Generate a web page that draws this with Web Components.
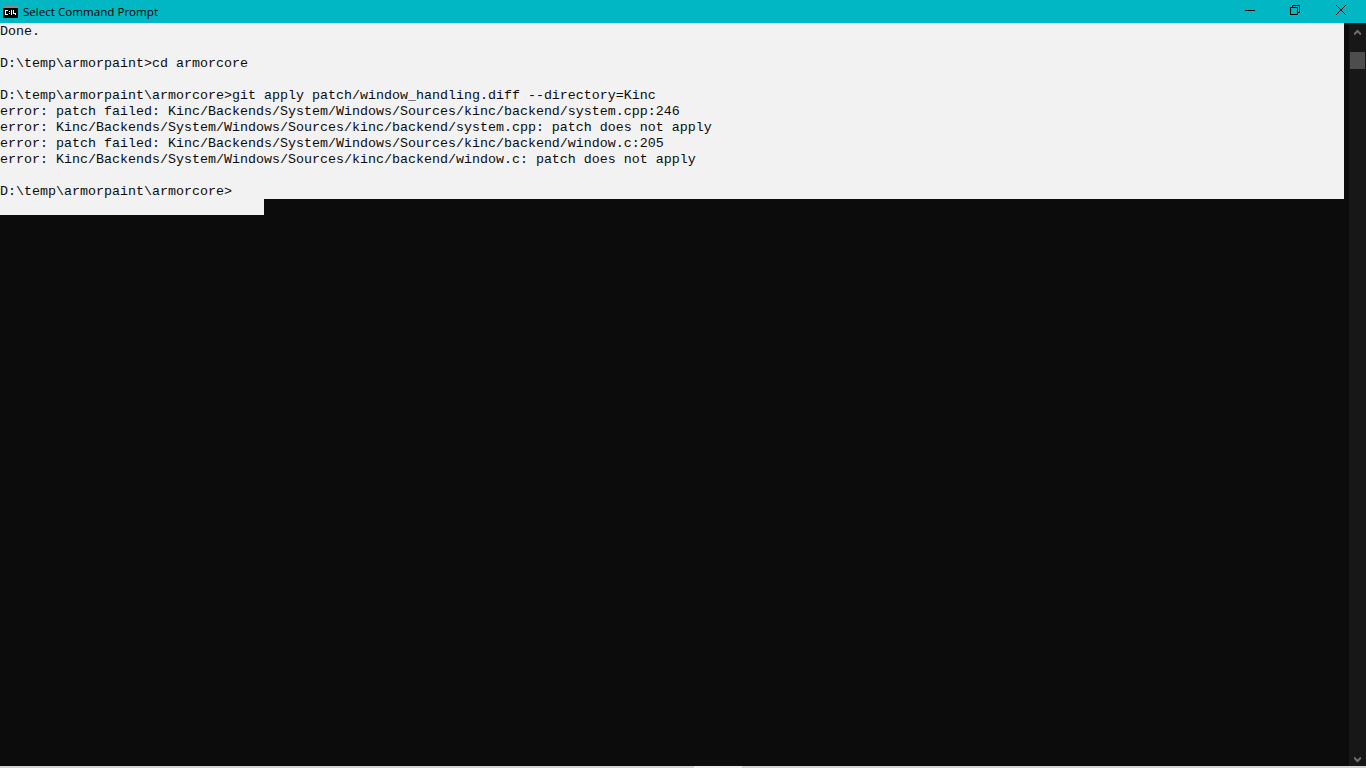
<!DOCTYPE html>
<html>
<head>
<meta charset="utf-8">
<title>Select Command Prompt</title>
<style>
  html, body { margin: 0; padding: 0; height: 100%; overflow: hidden; background: #0c0c0c; }
  console-window { height: 768px; }
</style>
</head>
<body>
<console-window>
  <title-bar slot="title">Select Command Prompt</title-bar>
  <console-body slot="body">
    <console-line>Done.</console-line>
    <console-line></console-line>
    <console-line>D:\temp\armorpaint&gt;cd armorcore</console-line>
    <console-line></console-line>
    <console-line>D:\temp\armorpaint\armorcore&gt;git apply patch/window_handling.diff --directory=Kinc</console-line>
    <console-line>error: patch failed: Kinc/Backends/System/Windows/Sources/kinc/backend/system.cpp:246</console-line>
    <console-line>error: Kinc/Backends/System/Windows/Sources/kinc/backend/system.cpp: patch does not apply</console-line>
    <console-line>error: patch failed: Kinc/Backends/System/Windows/Sources/kinc/backend/window.c:205</console-line>
    <console-line>error: Kinc/Backends/System/Windows/Sources/kinc/backend/window.c: patch does not apply</console-line>
    <console-line></console-line>
    <console-line>D:\temp\armorpaint\armorcore&gt;</console-line>
    <console-line short></console-line>
  </console-body>
  <console-scrollbar slot="scroll"></console-scrollbar>
  <task-strip slot="strip"></task-strip>
</console-window>

<script>
"use strict";

// || WINDOW ||
class ConsoleWindow extends HTMLElement {
  constructor() {
    super();
    const shadow = this.attachShadow({ mode: "open" });
    shadow.innerHTML = `
    <style>
      :host {
        display: grid;
        grid-template-columns: 1344px 5px 17px;
        grid-template-rows: 23px 743px 2px;
        width: 1366px;
        background: #0c0c0c;
      }
      .title, .strip { grid-column: 1 / 4; }
      .scroll { grid-column: 3; }
    </style>
    <div class="title"><slot name="title"></slot></div>
    <div><slot name="body"></slot></div>
    <div></div>
    <div class="scroll"><slot name="scroll"></slot></div>
    <div class="strip"><slot name="strip"></slot></div>
    `;
  }
}

// || TITLE BAR ||
class TitleBar extends HTMLElement {
  constructor() {
    super();
    const shadow = this.attachShadow({ mode: "open" });
    shadow.innerHTML = `
    <style>
      :host {
        display: flex;
        align-items: center;
        height: 23px;
        padding-right: 2px;
        background: #00b7c3;
        color: #000;
        font: 11.6px "Open Sans", "Noto Sans", sans-serif;
      }
      .icon { width: 16px; height: 16px; margin: 0 4px 0 3px; flex: none; }
      .label { flex: 1; white-space: nowrap; }
      .btn {
        width: 46px;
        height: 20px;
        margin-bottom: 3px;
        display: flex;
        align-items: center;
        justify-content: center;
        flex: none;
      }
      .btn svg { width: 12px; height: 12px; display: block; }
    </style>
    <svg class="icon" viewBox="0 0 16 16" shape-rendering="crispEdges">
      <rect x="0" y="2" width="15" height="12" fill="#000"/>
      <rect x="0" y="2" width="15" height="2" fill="#8a8a8a"/>
      <path d="M2 6h3v1H2zM2 7h1v3H2zM2 10h3v1H2zM6 7h1v1H6zM6 9h1v1H6zM8 6h1v5H8zM10 6h1v3h2v2h-1v-1h-2z" fill="#fff"/>
    </svg>
    <span class="label"><slot></slot></span>
    <div class="btn"><svg viewBox="0 0 12 12"><rect x="2" y="6" width="10" height="1" fill="#000"/></svg></div>
    <div class="btn"><svg viewBox="0 0 12 12" fill="none" stroke="#000"><rect x="1.5" y="3.5" width="7" height="7"/><path d="M3.5 3.5V1.5h7v7H8.5"/></svg></div>
    <div class="btn"><svg viewBox="0 0 12 12" fill="none" stroke="#000"><path d="M1 1l10 10M11 1L1 11"/></svg></div>
    `;
  }
}

// || CONSOLE ||
class ConsoleBody extends HTMLElement {
  constructor() {
    super();
    const shadow = this.attachShadow({ mode: "open" });
    shadow.innerHTML = `
    <style>
      :host { display: block; }
    </style>
    <slot></slot>
    `;
  }
}

class ConsoleLine extends HTMLElement {
  constructor() {
    super();
    const shadow = this.attachShadow({ mode: "open" });
    shadow.innerHTML = `
    <style>
      :host {
        display: block;
        box-sizing: border-box;
        height: 16px;
        padding-top: 1px;
        background: #f2f2f2;
        color: #0c0c0c;
        font-family: "Liberation Mono", "DejaVu Sans Mono", monospace;
        font-size: 13.333px;
        line-height: 16px;
      }
      :host([short]) { width: 264px; }
      slot { white-space: pre; }
    </style>
    <slot></slot>
    `;
  }
}

// || SCROLLBAR ||
class ConsoleScrollbar extends HTMLElement {
  constructor() {
    super();
    const shadow = this.attachShadow({ mode: "open" });
    shadow.innerHTML = `
    <style>
      :host {
        display: flex;
        flex-direction: column;
        align-items: center;
        height: 743px;
        box-sizing: border-box;
        padding: 6px 0 3px;
        background: #171717;
      }
      svg { width: 7px; height: 6px; display: block; flex: none; }
      .thumb { width: 15px; height: 17px; margin-top: 17px; background: #4d4d4d; flex: none; }
      .space { flex: 1; }
    </style>
    <svg viewBox="0 0 7 6" fill="none" stroke="#6e6e6e" stroke-width="2"><path d="M0 5.5L3.5 2 7 5.5"/></svg>
    <div class="thumb"></div>
    <div class="space"></div>
    <svg viewBox="0 0 7 6" fill="none" stroke="#6e6e6e" stroke-width="2"><path d="M0 0.5L3.5 4 7 0.5"/></svg>
    `;
  }
}

// || BOTTOM STRIP ||
class TaskStrip extends HTMLElement {
  constructor() {
    super();
    const shadow = this.attachShadow({ mode: "open" });
    shadow.innerHTML = `
    <style>
      :host {
        display: flex;
        height: 2px;
        background: #d4d4d4;
      }
      .active { width: 48px; margin-left: 694px; background: #f0f0f0; }
    </style>
    <div class="active"></div>
    `;
  }
}

function declareComponents() {
  customElements.define("console-window", ConsoleWindow);
  customElements.define("title-bar", TitleBar);
  customElements.define("console-body", ConsoleBody);
  customElements.define("console-line", ConsoleLine);
  customElements.define("console-scrollbar", ConsoleScrollbar);
  customElements.define("task-strip", TaskStrip);
}

declareComponents();
</script>
</body>
</html>
